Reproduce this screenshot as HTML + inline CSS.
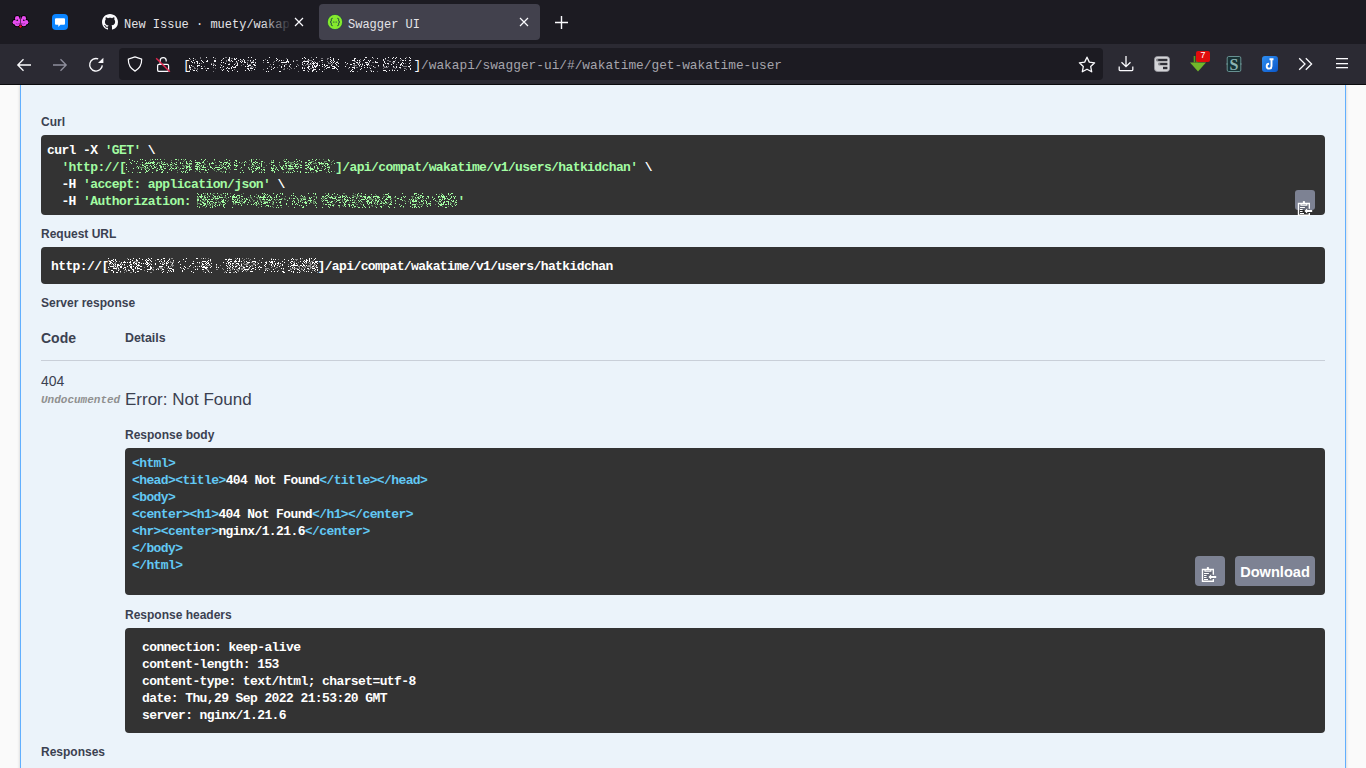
<!DOCTYPE html>
<html><head><meta charset="utf-8"><title>Swagger UI</title>
<style>
html,body{margin:0;padding:0}
body{width:1366px;height:768px;overflow:hidden;position:relative;background:#fafafa;font-family:"Liberation Sans",sans-serif}
.a{position:absolute;white-space:pre}
.mono{font-family:"Liberation Mono",monospace}
.h4{font-size:12px;line-height:16px;font-weight:bold;color:#3b4151}
.code{font-family:"Liberation Mono",monospace;font-size:13px;letter-spacing:-0.6px;line-height:17px;font-weight:bold;color:#fff}
.g{color:#a2fca2}
.t{color:#62c8f3}
.blk{position:absolute;background:#333;border-radius:4px}
.btn{position:absolute;background:#7d8293;border-radius:4px}
</style></head>
<body>
<svg width="0" height="0" style="position:absolute"><defs><symbol id="clip" viewBox="0 0 17 17">
  <rect x="2.5" y="3.5" width="10.8" height="11.8" fill="rgba(0,0,0,0.18)"/>
  <path d="M13.3 8.8V3.5H2.5V15.3H13.3V12.9" fill="none" stroke="#fff" stroke-width="1.4"/>
  <path d="M5 3.3V5.1H10.8V3.3" fill="none" stroke="#fff" stroke-width="1.2"/>
  <circle cx="7.9" cy="2.1" r="1.2" fill="#fff"/>
  <path d="M4 7.5h4.9M4 9.5h2.6M4 11.5h2.6M4 13.5h4" stroke="#fff" stroke-width="1"/>
  <path d="M8.4 11L11.2 8.2V10H16.2V12H11.2V13.8Z" fill="#fff"/>
</symbol></defs></svg>
<!-- ============ TAB STRIP ============ -->
<div class="a" style="left:0;top:0;width:1366px;height:44px;background:#1c1b22"></div>
<!-- brain icon -->
<svg class="a" style="left:12px;top:15px" width="17" height="14" viewBox="0 0 17 14">
  <g fill="#000"><circle cx="5.2" cy="3.4" r="3.1"/><circle cx="2.9" cy="7.2" r="3.1"/><circle cx="5.2" cy="8.8" r="3.3"/><circle cx="11.8" cy="3.4" r="3.1"/><circle cx="14.1" cy="7.2" r="3.1"/><circle cx="11.8" cy="8.8" r="3.3"/><rect x="5" y="1" width="7" height="10.5"/></g>
  <g fill="#e84df0"><circle cx="5.2" cy="3.4" r="2.3"/><circle cx="2.9" cy="7.2" r="2.3"/><circle cx="5.2" cy="8.8" r="2.5"/><circle cx="7" cy="6" r="2.2"/><circle cx="11.8" cy="3.4" r="2.3"/><circle cx="14.1" cy="7.2" r="2.3"/><circle cx="11.8" cy="8.8" r="2.5"/><circle cx="10" cy="6" r="2.2"/></g>
  <rect x="8" y="1.5" width="1" height="9.5" fill="#6a2270"/>
  <circle cx="5.3" cy="5.2" r="0.8" fill="#111"/><circle cx="11.7" cy="5.2" r="0.8" fill="#111"/>
  <path d="M3.8 8.4q1.5 1.2 3.2 0.3M13.2 8.4q-1.5 1.2-3.2 0.3" fill="none" stroke="#8a2a90" stroke-width="0.7"/>
  <circle cx="8.5" cy="11.6" r="1.7" fill="#000"/><circle cx="8.5" cy="11.5" r="1.2" fill="#ee1020"/>
</svg>
<!-- chat icon -->
<svg class="a" style="left:52px;top:14px" width="16" height="16" viewBox="0 0 16 16">
  <rect x="0" y="0" width="16" height="16" rx="4" fill="#0a84ff"/>
  <path d="M4 4.2h8a1 1 0 0 1 1 1v4.6a1 1 0 0 1-1 1H8.4L6.3 12.9V10.8H4a1 1 0 0 1-1-1V5.2a1 1 0 0 1 1-1z" fill="#fff"/>
</svg>
<!-- github tab -->
<svg class="a" style="left:102px;top:14px" width="16" height="16" viewBox="0 0 16 16"><path fill="#fbfbfe" d="M8 0C3.58 0 0 3.58 0 8c0 3.54 2.29 6.53 5.47 7.59.4.07.55-.17.55-.38 0-.19-.01-.82-.01-1.49-2.01.37-2.53-.49-2.69-.94-.09-.23-.48-.94-.82-1.13-.28-.15-.68-.52-.01-.53.63-.01 1.08.58 1.23.82.72 1.21 1.87.87 2.33.66.07-.52.28-.87.51-1.07-1.78-.2-3.64-.89-3.64-3.95 0-.87.31-1.59.82-2.15-.08-.2-.36-1.02.08-2.12 0 0 .67-.21 2.2.82.64-.18 1.32-.27 2-.27.68 0 1.36.09 2 .27 1.53-1.04 2.2-.82 2.2-.82.44 1.1.16 1.92.08 2.12.51.56.82 1.27.82 2.15 0 3.07-1.87 3.75-3.65 3.95.29.25.54.73.54 1.48 0 1.07-.01 1.93-.01 2.2 0 .21.15.46.55.38A8.013 8.013 0 0016 8c0-4.42-3.58-8-8-8z"/></svg>
<div class="a mono" style="left:124px;top:17px;font-size:12px;line-height:16px;color:#e4e4e8;width:168px;overflow:hidden">New Issue · muety/wakap</div>
<div class="a" style="left:262px;top:10px;width:30px;height:26px;background:linear-gradient(to right,rgba(28,27,34,0),#1c1b22)"></div>
<svg class="a" style="left:294px;top:17px" width="10" height="10" viewBox="0 0 10 10"><path d="M1 1L9 9M9 1L1 9" stroke="#fbfbfe" stroke-width="1.2"/></svg>
<!-- swagger tab -->
<div class="a" style="left:319px;top:4px;width:221px;height:36px;background:#42414d;border-radius:4px"></div>
<svg class="a" style="left:327px;top:14px" width="16" height="16" viewBox="0 0 16 16">
  <circle cx="8" cy="8" r="7.6" fill="#85ea2d" stroke="#173647" stroke-width="0.6"/>
  <path d="M5.6 4.3c-1 0-1.3.5-1.3 1.3v1.2c0 .6-.4 1-1 1.2.6.2 1 .6 1 1.2v1.2c0 .8.3 1.3 1.3 1.3M10.4 4.3c1 0 1.3.5 1.3 1.3v1.2c0 .6.4 1 1 1.2-.6.2-1 .6-1 1.2v1.2c0 .8-.3 1.3-1.3 1.3" fill="none" stroke="#173647" stroke-width="1"/>
  <circle cx="6.4" cy="8" r=".5" fill="#173647"/><circle cx="8" cy="8" r=".5" fill="#173647"/><circle cx="9.6" cy="8" r=".5" fill="#173647"/>
</svg>
<div class="a mono" style="left:348px;top:17px;font-size:12px;line-height:16px;color:#e4e4e8">Swagger UI</div>
<svg class="a" style="left:519px;top:17px" width="10" height="10" viewBox="0 0 10 10"><path d="M1 1L9 9M9 1L1 9" stroke="#fbfbfe" stroke-width="1.2"/></svg>
<svg class="a" style="left:554px;top:15px" width="15" height="15" viewBox="0 0 15 15"><path d="M7.5 1V14M1 7.5H14" stroke="#fbfbfe" stroke-width="1.4"/></svg>

<!-- ============ TOOLBAR ============ -->
<div class="a" style="left:0;top:44px;width:1366px;height:40px;background:#2b2a33"></div>
<div class="a" style="left:0;top:84px;width:1366px;height:1px;background:#0b0b0e"></div>
<!-- back -->
<svg class="a" style="left:16px;top:57px" width="16" height="16" viewBox="0 0 16 16"><path d="M15 8H2.2M7.5 2.3L1.8 8l5.7 5.7" fill="none" stroke="#fbfbfe" stroke-width="1.3"/></svg>
<!-- forward -->
<svg class="a" style="left:52px;top:57px" width="16" height="16" viewBox="0 0 16 16"><path d="M1 8h12.8M8.5 2.3L14.2 8l-5.7 5.7" fill="none" stroke="#8f8f9d" stroke-width="1.3"/></svg>
<!-- reload -->
<svg class="a" style="left:88px;top:57px" width="16" height="16" viewBox="0 0 16 16"><path d="M10.2 1.9A6.3 6.3 0 1 0 14.3 8.4" fill="none" stroke="#fbfbfe" stroke-width="1.35"/><path d="M10 6.1H15.4V0.7z" fill="#fbfbfe"/></svg>
<!-- urlbar -->
<div class="a" style="left:119px;top:48px;width:984px;height:32px;background:#1c1b22;border-radius:4px"></div>
<!-- shield -->
<svg class="a" style="left:127px;top:56px" width="16" height="16" viewBox="0 0 16 16"><path d="M8 0.9L1.3 3.1C1.2 9.2 4 13 8 15.1 12 13 14.8 9.2 14.7 3.1Z" fill="none" stroke="#fbfbfe" stroke-width="1.2" stroke-linejoin="round"/></svg>
<!-- lock with slash -->
<svg class="a" style="left:155px;top:56px" width="16" height="16" viewBox="0 0 16 16"><path d="M5.2 8.4V4.6a3 3 0 0 1 6 0V5.6" fill="none" stroke="#fbfbfe" stroke-width="1.25"/><rect x="2.6" y="8.4" width="11" height="7" rx="1.4" fill="none" stroke="#fbfbfe" stroke-width="1.25"/><path d="M1.2 2.2L14.9 15.8" stroke="#e22850" stroke-width="1.4"/></svg>
<div class="a mono" style="left:183px;top:58px;font-size:12.8px;line-height:16px;color:#fbfbfe">[<span style="color:transparent">xxxxxxxxxxxxxxxxxxxxxxxxxxxxx</span>]<span style="color:#a6a5ad">/wakapi/swagger-ui/#/wakatime/get-wakatime-user</span></div>
<svg style="position:absolute;left:189px;top:57px;opacity:1.0" width="222" height="15" viewBox="0 0 222 15"><path fill="#f0f0f4" d="M207 0h1v1h-1zM12 3h1v1h-1zM32 8h1v1h-1zM95 9h1v1h-1zM181 3h1v1h-1zM164 6h2v1h-2zM200 13h1v1h-1zM137 8h2v1h-2zM61 3h1v1h-1zM205 13h1v1h-1zM56 9h1v1h-1zM34 5h1v1h-1zM194 2h1v1h-1zM14 5h1v1h-1zM133 9h1v1h-1zM13 4h1v1h-1zM10 6h1v1h-1zM127 6h2v1h-2zM92 5h6v1h-6zM168 3h1v1h-1zM195 4h1v1h-1zM144 3h1v1h-1zM97 4h3v1h-3zM84 7h1v1h-1zM161 14h1v1h-1zM124 12h3v1h-3zM74 3h1v1h-1zM221 1h1v1h-1zM149 6h1v1h-1zM127 0h1v1h-1zM51 2h1v1h-1zM208 13h1v1h-1zM100 9h1v1h-1zM43 9h1v1h-1zM78 11h1v1h-1zM212 6h1v1h-1zM31 10h1v1h-1zM62 0h1v1h-1zM82 12h1v1h-1zM156 5h1v1h-1zM176 5h3v1h-3zM114 4h6v1h-6zM39 3h2v1h-2zM1 12h1v1h-1zM51 4h1v1h-1zM113 1h1v1h-1zM115 0h1v1h-1zM141 2h1v1h-1zM2 4h1v1h-1zM165 2h1v1h-1zM144 1h1v1h-1zM115 6h1v1h-1zM196 1h1v1h-1zM189 8h1v1h-1zM60 13h1v1h-1zM221 12h1v1h-1zM204 4h2v1h-2zM123 13h2v1h-2zM34 12h1v1h-1zM65 8h2v1h-2zM113 5h1v1h-1zM165 11h1v1h-1zM135 7h1v1h-1zM197 14h1v1h-1zM61 11h3v1h-3zM87 3h1v1h-1zM142 5h1v1h-1zM48 14h1v1h-1zM178 8h1v1h-1zM204 0h1v1h-1zM149 9h1v1h-1zM137 11h1v1h-1zM66 5h1v1h-1zM44 10h3v1h-3zM195 5h1v1h-1zM194 7h1v1h-1zM37 11h1v1h-1zM113 11h1v1h-1zM144 2h1v1h-1zM136 9h1v1h-1zM141 0h1v1h-1zM172 11h1v1h-1zM84 11h1v1h-1zM7 4h2v1h-2zM65 12h1v1h-1zM179 3h1v1h-1zM45 7h1v1h-1zM36 6h1v1h-1zM184 14h1v1h-1zM54 2h1v1h-1zM213 3h2v1h-2zM64 7h2v1h-2zM142 8h1v1h-1zM47 1h1v1h-1zM130 12h1v1h-1zM211 1h1v1h-1zM56 13h1v1h-1zM8 8h3v1h-3zM99 5h1v1h-1zM132 3h2v1h-2zM32 3h1v1h-1zM79 14h1v1h-1zM12 9h1v1h-1zM143 11h3v1h-3zM126 5h1v1h-1zM0 10h2v1h-2zM123 6h3v1h-3zM184 9h1v1h-1zM175 10h1v1h-1zM95 8h1v1h-1zM123 14h1v1h-1zM59 0h1v1h-1zM167 5h2v1h-2zM138 10h3v1h-3zM2 8h1v1h-1zM119 9h2v1h-2zM0 1h1v1h-1zM46 9h1v1h-1zM58 9h2v1h-2zM128 7h1v1h-1zM43 4h1v1h-1zM135 8h1v1h-1zM8 9h1v1h-1zM113 7h1v1h-1zM90 3h1v1h-1zM87 1h1v1h-1zM77 14h1v1h-1zM8 6h1v1h-1zM34 1h1v1h-1zM124 5h1v1h-1zM40 1h1v1h-1zM55 4h1v1h-1zM163 14h2v1h-2zM39 7h2v1h-2zM38 13h1v1h-1zM127 8h2v1h-2zM213 8h1v1h-1zM170 5h1v1h-1zM98 2h1v1h-1zM49 3h1v1h-1zM197 9h1v1h-1zM32 5h1v1h-1zM216 1h1v1h-1zM5 5h1v1h-1zM123 10h2v1h-2zM62 5h3v1h-3zM211 7h2v1h-2zM220 0h1v1h-1zM210 10h2v1h-2zM211 8h1v1h-1zM116 1h1v1h-1zM203 13h1v1h-1zM26 8h1v1h-1zM133 7h1v1h-1zM78 5h2v1h-2zM18 11h2v1h-2zM24 8h1v1h-1zM143 9h3v1h-3zM59 12h1v1h-1zM207 9h1v1h-1zM92 9h1v1h-1zM47 8h2v1h-2zM209 5h1v1h-1zM42 3h1v1h-1zM25 4h2v1h-2zM124 2h1v1h-1zM123 8h1v1h-1zM42 10h1v1h-1zM172 9h1v1h-1zM177 7h3v1h-3zM163 10h3v1h-3zM177 14h1v1h-1zM4 13h2v1h-2zM24 0h1v1h-1zM204 6h1v1h-1zM113 10h1v1h-1zM169 7h1v1h-1zM194 13h3v1h-3zM173 7h1v1h-1zM194 8h1v1h-1zM98 3h1v1h-1zM142 3h1v1h-1zM221 8h1v1h-1zM101 7h1v1h-1zM43 13h1v1h-1zM104 4h1v1h-1zM0 9h1v1h-1zM207 10h1v1h-1zM163 3h3v1h-3zM127 14h1v1h-1zM22 7h1v1h-1zM88 2h1v1h-1zM125 8h1v1h-1zM130 8h1v1h-1zM161 7h2v1h-2zM39 11h2v1h-2zM196 6h1v1h-1zM186 4h1v1h-1zM17 4h2v1h-2zM170 3h1v1h-1zM175 2h1v1h-1zM55 3h1v1h-1zM42 11h1v1h-1zM175 8h1v1h-1zM145 10h2v1h-2zM220 3h2v1h-2zM114 13h2v1h-2zM194 3h1v1h-1zM3 5h1v1h-1zM126 10h1v1h-1zM133 14h1v1h-1zM120 12h1v1h-1zM39 14h1v1h-1zM64 3h1v1h-1zM156 9h1v1h-1zM4 3h1v1h-1zM145 4h1v1h-1zM25 3h2v1h-2zM180 4h1v1h-1zM39 2h2v1h-2zM17 0h1v1h-1zM119 14h1v1h-1zM45 2h2v1h-2zM147 7h1v1h-1zM78 3h1v1h-1zM188 1h1v1h-1zM119 5h1v1h-1zM204 9h1v1h-1zM176 0h2v1h-2zM58 11h2v1h-2zM215 13h1v1h-1zM165 1h2v1h-2zM52 5h1v1h-1zM214 6h1v1h-1zM216 3h1v1h-1zM48 6h1v1h-1zM186 5h3v1h-3zM160 10h1v1h-1zM171 7h1v1h-1zM219 9h2v1h-2zM163 12h1v1h-1zM92 3h1v1h-1zM12 11h2v1h-2zM66 2h1v1h-1zM92 10h1v1h-1zM179 6h1v1h-1zM199 0h1v1h-1zM47 4h1v1h-1zM8 5h1v1h-1zM90 14h2v1h-2zM107 9h1v1h-1zM220 6h1v1h-1zM123 9h1v1h-1zM123 4h1v1h-1zM45 1h1v1h-1zM80 0h1v1h-1zM203 1h1v1h-1zM182 14h1v1h-1zM85 10h1v1h-1zM149 2h1v1h-1zM119 11h1v1h-1zM121 6h1v1h-1zM147 5h2v1h-2zM55 5h2v1h-2zM4 1h1v1h-1zM158 6h1v1h-1zM0 14h1v1h-1zM53 4h1v1h-1zM40 0h1v1h-1zM59 8h3v1h-3zM18 3h1v1h-1zM202 7h1v1h-1zM146 6h1v1h-1zM58 7h1v1h-1zM221 11h1v1h-1zM115 11h1v1h-1zM148 12h1v1h-1zM38 10h1v1h-1zM48 7h1v1h-1zM170 8h1v1h-1zM124 7h1v1h-1zM119 2h1v1h-1zM183 0h1v1h-1zM0 8h1v1h-1zM198 6h2v1h-2zM7 13h1v1h-1zM17 13h1v1h-1zM162 13h1v1h-1zM178 10h1v1h-1zM206 1h1v1h-1zM171 12h1v1h-1zM144 5h1v1h-1zM181 11h1v1h-1zM33 13h1v1h-1zM125 9h3v1h-3zM174 3h1v1h-1zM118 10h2v1h-2zM34 9h1v1h-1zM118 6h1v1h-1zM147 11h1v1h-1zM213 5h1v1h-1zM141 4h1v1h-1z"/><path fill="#f0f0f4" fill-opacity="0.45" d="M31 7h1v1h-1zM173 6h1v1h-1zM58 5h1v1h-1zM11 1h1v1h-1zM217 12h1v1h-1zM26 11h1v1h-1zM109 14h1v1h-1zM102 11h1v1h-1zM46 6h1v1h-1zM180 10h1v1h-1zM216 6h1v1h-1zM196 2h1v1h-1zM206 3h1v1h-1zM204 10h2v1h-2zM207 7h1v1h-1zM194 11h1v1h-1zM33 2h1v1h-1zM54 7h1v1h-1zM94 12h2v1h-2zM89 4h1v1h-1zM138 4h1v1h-1zM133 5h1v1h-1zM195 10h4v1h-4zM135 12h1v1h-1zM84 5h1v1h-1zM118 3h5v1h-5zM80 9h1v1h-1zM97 1h1v1h-1zM143 4h1v1h-1zM8 12h1v1h-1zM24 14h1v1h-1zM198 3h2v1h-2zM180 8h1v1h-1zM122 0h1v1h-1zM130 4h1v1h-1zM95 11h1v1h-1zM180 5h1v1h-1zM168 14h1v1h-1zM40 6h1v1h-1zM170 9h1v1h-1zM63 4h2v1h-2zM121 11h2v1h-2zM0 11h2v1h-2zM199 7h1v1h-1zM100 12h1v1h-1zM212 2h1v1h-1zM36 0h2v1h-2zM52 3h2v1h-2zM90 8h1v1h-1zM107 3h2v1h-2zM32 12h1v1h-1zM199 9h1v1h-1zM93 7h1v1h-1zM138 2h1v1h-1zM149 14h1v1h-1zM81 7h1v1h-1zM47 5h2v1h-2zM143 6h1v1h-1zM200 4h2v1h-2zM6 2h1v1h-1zM8 11h1v1h-1zM96 7h2v1h-2zM74 5h1v1h-1zM100 8h1v1h-1zM188 14h1v1h-1zM66 10h1v1h-1zM5 6h1v1h-1zM206 11h1v1h-1zM76 2h1v1h-1zM58 6h1v1h-1zM125 4h1v1h-1zM185 10h2v1h-2zM215 11h2v1h-2zM177 6h1v1h-1zM171 2h1v1h-1zM24 7h2v1h-2zM12 6h1v1h-1zM113 6h1v1h-1zM203 12h1v1h-1zM26 1h1v1h-1zM33 10h1v1h-1zM214 9h4v1h-4zM115 3h1v1h-1zM117 7h6v1h-6zM64 10h1v1h-1zM58 3h2v1h-2zM104 3h1v1h-1zM101 10h1v1h-1zM85 4h1v1h-1zM24 6h1v1h-1zM94 3h1v1h-1zM211 11h1v1h-1zM211 3h1v1h-1zM114 8h1v1h-1zM22 6h1v1h-1zM119 8h1v1h-1zM124 11h1v1h-1zM138 1h2v1h-2zM37 3h1v1h-1zM37 4h1v1h-1zM3 9h2v1h-2zM165 7h1v1h-1zM62 9h2v1h-2zM109 8h1v1h-1zM203 5h3v1h-3zM16 11h1v1h-1zM8 14h1v1h-1zM148 4h1v1h-1zM165 4h2v1h-2zM159 11h1v1h-1zM118 13h1v1h-1zM40 4h2v1h-2zM82 10h1v1h-1zM147 8h2v1h-2zM74 12h1v1h-1zM189 9h1v1h-1zM184 1h1v1h-1zM128 5h1v1h-1zM115 10h1v1h-1zM61 10h2v1h-2zM140 9h1v1h-1zM170 4h2v1h-2zM116 8h1v1h-1zM139 6h3v1h-3zM132 1h2v1h-2zM220 10h1v1h-1zM221 5h1v1h-1zM62 6h1v1h-1zM98 11h1v1h-1zM45 12h1v1h-1zM194 9h2v1h-2zM0 13h1v1h-1zM61 4h1v1h-1zM66 6h1v1h-1zM164 8h4v1h-4zM82 9h1v1h-1zM183 5h2v1h-2zM52 8h1v1h-1zM142 7h2v1h-2zM181 13h2v1h-2zM24 10h1v1h-1zM105 11h1v1h-1zM157 7h1v1h-1zM11 0h1v1h-1zM15 9h1v1h-1zM108 7h1v1h-1zM122 5h1v1h-1zM88 10h1v1h-1zM173 8h1v1h-1zM60 7h2v1h-2zM5 10h1v1h-1zM135 10h1v1h-1zM139 5h1v1h-1zM182 8h1v1h-1zM167 10h2v1h-2zM168 6h3v1h-3zM42 1h2v1h-2zM5 11h2v1h-2zM217 0h1v1h-1zM3 12h1v1h-1zM165 9h1v1h-1zM62 13h1v1h-1zM1 2h1v1h-1z"/></svg>
<!-- star -->
<svg class="a" style="left:1078px;top:56px" width="18" height="17" viewBox="0 0 18 17"><path d="M9 1.2l2.3 4.9 5.3.7-3.9 3.7 1 5.3L9 13.2l-4.7 2.6 1-5.3L1.4 6.8l5.3-.7z" fill="none" stroke="#fbfbfe" stroke-width="1.3" stroke-linejoin="round"/></svg>
<!-- download -->
<svg class="a" style="left:1118px;top:55px" width="16" height="17" viewBox="0 0 16 17"><path d="M8 1v10.5M3.5 7.2L8 11.7l4.5-4.5M1.2 11.5v3.3a.8.8 0 0 0 .8.8h12a.8.8 0 0 0 .8-.8v-3.3" fill="none" stroke="#fbfbfe" stroke-width="1.3"/></svg>
<!-- server icon -->
<svg class="a" style="left:1154px;top:56px" width="16" height="16" viewBox="0 0 16 16"><rect x="0.5" y="0.5" width="15" height="15" rx="3" fill="#d4d4d8" stroke="#9a9aa2" stroke-width="0.8"/><rect x="2.6" y="2.8" width="10.8" height="2.4" fill="#2e2e36"/><rect x="4.6" y="6.8" width="8.8" height="2.4" fill="#2e2e36"/><rect x="9" y="10.8" width="4.4" height="2.4" fill="#2e2e36"/><rect x="3.2" y="3.5" width="1" height="1" fill="#fff"/><rect x="5.2" y="7.5" width="1" height="1" fill="#fff"/></svg>
<!-- green arrow ext -->
<svg class="a" style="left:1189px;top:54px" width="18" height="18" viewBox="0 0 18 18"><path d="M1 8.5H17L9 17.5Z" fill="#72b62a"/><path d="M5.5 2v6.5M8 3v5.5M10.5 2.5V8" stroke="#5aa020" stroke-width="1.6"/></svg>
<div class="a" style="left:1196px;top:51px;width:14px;height:11px;background:#e00c0c;border-radius:2px"></div>
<div class="a" style="left:1196px;top:50px;width:14px;height:12px;font-size:9px;line-height:12px;color:#fff;text-align:center;font-family:'Liberation Mono',monospace">7</div>
<!-- S icon -->
<svg class="a" style="left:1226px;top:56px" width="16" height="16" viewBox="0 0 16 16"><rect x="1.2" y="0.5" width="13.6" height="15" rx="1.5" fill="#183234" stroke="#6f9c9c" stroke-width="0.9"/><path d="M0.3 8h1.5M14.2 8h1.5" stroke="#6f9c9c" stroke-width="1"/><text x="8" y="13.6" text-anchor="middle" font-family="Liberation Serif" font-weight="bold" font-size="16" fill="#8cb4b2">S</text></svg>
<!-- J icon -->
<svg class="a" style="left:1262px;top:56px" width="16" height="16" viewBox="0 0 16 16"><defs><linearGradient id="jg" x1="0" y1="0" x2="1" y2="1"><stop offset="0" stop-color="#2f8ff2"/><stop offset="1" stop-color="#0a56c9"/></linearGradient></defs><rect x="0" y="0" width="16" height="16" rx="3" fill="url(#jg)"/><path d="M7.5 3.2h4M9.5 3.2v7a2.4 2.4 0 1 1-2.4-2.4" fill="none" stroke="#fff" stroke-width="1.9"/></svg>
<!-- >> -->
<svg class="a" style="left:1298px;top:57px" width="16" height="14" viewBox="0 0 16 14"><path d="M1.2 1.2L7 7 1.2 12.8M7.8 1.2L13.6 7 7.8 12.8" fill="none" stroke="#fbfbfe" stroke-width="1.3"/></svg>
<!-- hamburger -->
<div class="a" style="left:1336px;top:58px;width:12px;height:1px;background:#fbfbfe;box-shadow:0 1px 0 rgba(251,251,254,.3)"></div>
<div class="a" style="left:1336px;top:63px;width:12px;height:1px;background:#fbfbfe;box-shadow:0 1px 0 rgba(251,251,254,.3)"></div>
<div class="a" style="left:1336px;top:67px;width:12px;height:1px;background:#fbfbfe;box-shadow:0 1px 0 rgba(251,251,254,.3)"></div>

<!-- ============ CONTENT ============ -->
<div class="a" style="left:20px;top:85px;width:1324px;height:700px;background:#ebf3fa;border:1px solid #61affe;border-top:none;box-shadow:0 0 3px rgba(0,0,0,.19)"></div>

<div class="a h4" style="left:41px;top:114px">Curl</div>
<div class="blk" style="left:41px;top:135px;width:1284px;height:80px"></div>
<div class="a code" style="left:47px;top:142px">curl -X <span class="g">'GET'</span> \
  <span class="g">'http://[                             ]/api/compat/wakatime/v1/users/hatkidchan'</span> \
  -H <span class="g">'accept: application/json'</span> \
  -H <span class="g">'Authorization:                                     '</span></div>
<svg style="position:absolute;left:126px;top:159px;opacity:1.0" width="209" height="14" viewBox="0 0 209 14"><path fill="#a2fca2" d="M49 0h2v1h-2zM77 6h1v1h-1zM199 9h1v1h-1zM89 8h5v1h-5zM86 3h1v1h-1zM8 2h1v1h-1zM149 10h1v1h-1zM115 8h1v1h-1zM54 9h1v1h-1zM129 11h1v1h-1zM103 1h1v1h-1zM35 2h1v1h-1zM201 6h1v1h-1zM84 7h1v1h-1zM123 10h1v1h-1zM125 8h1v1h-1zM71 4h1v1h-1zM100 4h1v1h-1zM118 3h1v1h-1zM166 13h1v1h-1zM101 7h2v1h-2zM99 5h1v1h-1zM48 4h1v1h-1zM130 0h1v1h-1zM77 7h1v1h-1zM91 10h3v1h-3zM34 0h1v1h-1zM108 5h1v1h-1zM49 5h2v1h-2zM160 0h1v1h-1zM20 6h2v1h-2zM135 5h1v1h-1zM138 13h1v1h-1zM96 8h1v1h-1zM168 7h3v1h-3zM70 10h2v1h-2zM16 3h1v1h-1zM64 1h1v1h-1zM73 8h1v1h-1zM130 7h1v1h-1zM33 10h1v1h-1zM183 3h3v1h-3zM205 12h1v1h-1zM160 13h1v1h-1zM19 1h1v1h-1zM35 4h1v1h-1zM14 0h1v1h-1zM50 8h1v1h-1zM73 4h2v1h-2zM113 3h1v1h-1zM42 6h1v1h-1zM184 10h4v1h-4zM69 7h4v1h-4zM164 13h1v1h-1zM34 8h2v1h-2zM12 8h1v1h-1zM193 4h5v1h-5zM45 3h1v1h-1zM99 13h1v1h-1zM135 6h1v1h-1zM22 3h1v1h-1zM146 10h1v1h-1zM155 9h2v1h-2zM104 6h1v1h-1zM103 8h1v1h-1zM172 7h1v1h-1zM28 5h1v1h-1zM24 3h5v1h-5zM118 6h1v1h-1zM13 13h2v1h-2zM50 3h1v1h-1zM160 7h1v1h-1zM135 7h1v1h-1zM75 10h3v1h-3zM83 4h1v1h-1zM150 8h1v1h-1zM0 8h1v1h-1zM56 13h1v1h-1zM145 11h3v1h-3zM56 4h1v1h-1zM126 13h1v1h-1zM131 8h3v1h-3zM190 12h2v1h-2zM20 11h1v1h-1zM24 6h1v1h-1zM2 12h1v1h-1zM20 12h2v1h-2zM59 0h1v1h-1zM45 8h1v1h-1zM55 12h1v1h-1zM5 4h1v1h-1zM171 2h1v1h-1zM182 13h1v1h-1zM155 8h2v1h-2zM44 9h1v1h-1zM202 10h1v1h-1zM97 5h1v1h-1zM147 6h2v1h-2zM98 3h4v1h-4zM79 10h1v1h-1zM19 4h6v1h-6zM184 4h1v1h-1zM16 0h1v1h-1zM184 11h1v1h-1zM94 3h2v1h-2zM190 0h1v1h-1zM188 8h1v1h-1zM30 11h2v1h-2zM171 12h1v1h-1zM65 2h1v1h-1zM135 4h1v1h-1zM174 13h1v1h-1zM198 10h1v1h-1zM63 8h2v1h-2zM162 2h1v1h-1zM129 9h3v1h-3zM191 9h2v1h-2zM88 0h1v1h-1zM73 6h1v1h-1zM133 13h1v1h-1zM162 9h6v1h-6zM135 10h1v1h-1zM63 11h1v1h-1zM138 11h1v1h-1zM81 13h1v1h-1zM28 7h1v1h-1zM23 10h1v1h-1zM174 6h2v1h-2zM78 1h1v1h-1zM10 4h1v1h-1zM118 5h1v1h-1zM110 4h1v1h-1zM0 10h1v1h-1zM49 9h2v1h-2zM28 8h2v1h-2zM30 5h1v1h-1zM55 0h1v1h-1zM173 1h1v1h-1zM108 10h3v1h-3zM41 5h1v1h-1zM130 3h2v1h-2zM60 2h1v1h-1zM97 7h1v1h-1zM75 0h1v1h-1zM196 7h1v1h-1zM162 6h3v1h-3zM11 7h1v1h-1zM26 4h2v1h-2zM63 4h3v1h-3zM84 8h2v1h-2zM168 4h1v1h-1zM75 6h1v1h-1zM16 6h2v1h-2zM167 11h1v1h-1zM156 10h2v1h-2zM6 13h1v1h-1zM179 13h2v1h-2zM186 0h1v1h-1zM60 8h2v1h-2zM110 2h1v1h-1zM77 2h1v1h-1zM201 8h3v1h-3zM33 6h2v1h-2zM70 5h3v1h-3zM88 9h1v1h-1zM163 7h4v1h-4zM35 10h2v1h-2zM76 8h4v1h-4zM182 4h1v1h-1zM126 7h1v1h-1zM15 10h1v1h-1zM60 11h1v1h-1zM152 11h1v1h-1zM54 4h1v1h-1zM145 5h1v1h-1zM133 9h1v1h-1zM31 4h1v1h-1zM174 8h2v1h-2zM126 4h1v1h-1zM189 11h2v1h-2zM60 7h4v1h-4zM79 11h2v1h-2zM147 1h1v1h-1zM193 11h3v1h-3zM6 1h1v1h-1zM168 12h1v1h-1zM69 3h5v1h-5zM19 8h1v1h-1zM157 6h1v1h-1zM60 3h1v1h-1zM11 2h1v1h-1zM82 10h1v1h-1zM19 13h1v1h-1zM108 6h4v1h-4zM60 9h1v1h-1zM181 8h2v1h-2zM202 12h1v1h-1zM0 5h1v1h-1zM45 11h1v1h-1zM43 10h1v1h-1zM63 6h1v1h-1zM119 2h1v1h-1zM94 9h2v1h-2zM110 7h1v1h-1zM100 10h1v1h-1zM4 3h1v1h-1zM73 10h1v1h-1zM20 3h1v1h-1zM27 2h1v1h-1zM59 13h1v1h-1zM126 12h2v1h-2zM37 11h1v1h-1zM99 12h1v1h-1zM25 7h1v1h-1zM97 4h1v1h-1zM83 5h1v1h-1zM44 5h2v1h-2zM73 12h1v1h-1zM41 13h1v1h-1zM191 8h1v1h-1zM179 3h2v1h-2zM208 4h1v1h-1zM129 2h1v1h-1zM169 6h1v1h-1zM148 13h1v1h-1zM26 9h2v1h-2zM93 2h1v1h-1zM175 2h1v1h-1zM18 7h2v1h-2zM179 6h3v1h-3zM133 4h1v1h-1zM151 10h1v1h-1zM122 8h1v1h-1zM202 0h1v1h-1zM158 2h2v1h-2zM57 12h1v1h-1zM114 13h1v1h-1zM125 1h1v1h-1zM69 1h1v1h-1zM59 12h1v1h-1zM182 1h2v1h-2zM179 9h2v1h-2zM159 6h2v1h-2zM38 3h1v1h-1zM168 2h1v1h-1zM170 0h1v1h-1zM154 7h1v1h-1zM174 12h1v1h-1zM108 3h1v1h-1zM148 12h1v1h-1zM189 1h1v1h-1zM98 8h2v1h-2zM126 5h2v1h-2zM31 9h1v1h-1zM159 4h2v1h-2zM37 7h1v1h-1zM102 4h2v1h-2zM145 9h3v1h-3zM69 9h3v1h-3zM135 2h2v1h-2zM129 4h1v1h-1zM135 13h1v1h-1zM3 0h1v1h-1zM198 6h1v1h-1zM16 5h1v1h-1zM145 3h3v1h-3zM190 6h1v1h-1zM125 0h1v1h-1zM34 7h2v1h-2zM127 3h2v1h-2zM102 6h1v1h-1zM182 7h1v1h-1zM116 11h1v1h-1zM183 9h4v1h-4zM193 5h1v1h-1zM79 0h1v1h-1zM29 0h1v1h-1zM109 1h2v1h-2zM169 5h3v1h-3zM103 5h1v1h-1zM36 12h1v1h-1zM63 10h3v1h-3zM38 9h2v1h-2zM130 10h1v1h-1zM153 3h1v1h-1zM21 8h1v1h-1zM86 9h1v1h-1zM12 9h1v1h-1zM145 8h1v1h-1zM93 6h1v1h-1zM162 13h1v1h-1zM26 0h1v1h-1zM31 0h1v1h-1zM199 4h3v1h-3zM117 13h1v1h-1zM182 5h2v1h-2zM36 5h4v1h-4zM188 7h1v1h-1zM202 1h2v1h-2zM195 3h1v1h-1zM56 9h2v1h-2zM26 13h1v1h-1zM7 9h1v1h-1zM203 13h1v1h-1zM61 13h1v1h-1zM46 9h2v1h-2zM199 7h1v1h-1zM201 5h2v1h-2zM71 8h1v1h-1zM125 2h1v1h-1zM22 11h1v1h-1zM125 10h1v1h-1zM127 9h1v1h-1zM54 3h1v1h-1zM35 13h2v1h-2zM76 3h2v1h-2zM60 4h2v1h-2zM192 3h2v1h-2zM170 9h2v1h-2zM137 10h2v1h-2zM85 4h3v1h-3zM19 10h1v1h-1zM27 6h1v1h-1zM100 0h1v1h-1zM184 8h1v1h-1z"/><path fill="#a2fca2" fill-opacity="0.45" d="M30 7h1v1h-1zM98 9h3v1h-3zM158 0h1v1h-1zM208 12h1v1h-1zM170 3h1v1h-1zM89 6h2v1h-2zM94 12h2v1h-2zM184 7h1v1h-1zM147 2h1v1h-1zM52 1h1v1h-1zM123 5h1v1h-1zM162 4h1v1h-1zM128 7h1v1h-1zM185 2h3v1h-3zM200 13h1v1h-1zM191 10h1v1h-1zM125 3h1v1h-1zM34 9h2v1h-2zM202 11h1v1h-1zM45 1h1v1h-1zM133 0h1v1h-1zM88 1h1v1h-1zM133 7h1v1h-1zM44 6h1v1h-1zM149 7h1v1h-1zM125 6h1v1h-1zM102 9h2v1h-2zM159 9h2v1h-2zM198 3h1v1h-1zM138 3h1v1h-1zM98 1h1v1h-1zM143 4h1v1h-1zM78 5h2v1h-2zM197 0h1v1h-1zM206 2h1v1h-1zM193 0h1v1h-1zM48 10h1v1h-1zM120 3h1v1h-1zM78 13h1v1h-1zM202 7h2v1h-2zM49 7h1v1h-1zM127 0h1v1h-1zM61 10h1v1h-1zM39 7h1v1h-1zM187 4h4v1h-4zM185 5h1v1h-1zM33 4h1v1h-1zM18 5h2v1h-2zM71 11h1v1h-1zM156 7h2v1h-2zM65 7h1v1h-1zM58 8h1v1h-1zM147 8h1v1h-1zM205 3h1v1h-1zM31 3h3v1h-3zM158 8h1v1h-1zM69 6h2v1h-2zM14 8h4v1h-4zM94 5h2v1h-2zM132 10h1v1h-1zM163 11h1v1h-1zM90 12h1v1h-1zM45 10h1v1h-1zM37 8h1v1h-1zM57 2h1v1h-1zM95 7h1v1h-1zM146 12h1v1h-1zM58 1h1v1h-1zM175 3h1v1h-1zM23 2h1v1h-1zM195 5h3v1h-3zM131 5h1v1h-1zM74 13h1v1h-1zM160 8h1v1h-1zM153 6h1v1h-1zM73 9h2v1h-2zM18 9h5v1h-5zM25 8h1v1h-1zM153 5h1v1h-1zM59 6h2v1h-2zM116 3h1v1h-1zM11 13h1v1h-1zM179 4h1v1h-1zM160 3h8v1h-8zM166 8h1v1h-1zM185 13h1v1h-1zM157 1h1v1h-1zM203 9h1v1h-1zM63 9h2v1h-2zM180 10h2v1h-2zM114 9h1v1h-1zM104 3h1v1h-1zM195 9h1v1h-1zM135 12h1v1h-1zM69 12h1v1h-1zM52 0h1v1h-1zM53 10h1v1h-1zM157 13h1v1h-1zM135 3h1v1h-1zM88 11h1v1h-1zM159 5h1v1h-1zM44 7h2v1h-2zM51 11h1v1h-1zM147 7h1v1h-1zM78 4h1v1h-1zM57 0h1v1h-1zM162 10h4v1h-4zM149 9h2v1h-2zM56 6h2v1h-2zM38 0h1v1h-1zM51 7h1v1h-1zM169 8h1v1h-1zM37 4h1v1h-1zM35 3h2v1h-2zM145 2h1v1h-1zM190 13h1v1h-1zM109 8h1v1h-1zM13 7h1v1h-1zM52 8h1v1h-1zM104 10h1v1h-1zM187 13h1v1h-1zM183 6h1v1h-1zM92 11h1v1h-1zM132 6h1v1h-1zM14 5h1v1h-1zM115 4h1v1h-1zM101 2h1v1h-1zM81 7h1v1h-1zM46 6h2v1h-2zM171 4h2v1h-2zM198 2h3v1h-3zM15 9h1v1h-1zM199 5h1v1h-1zM123 1h1v1h-1zM30 10h1v1h-1zM188 9h1v1h-1zM164 8h1v1h-1zM191 7h1v1h-1zM81 2h1v1h-1zM96 13h1v1h-1zM164 5h4v1h-4zM61 5h5v1h-5zM161 12h2v1h-2zM136 11h1v1h-1zM126 11h1v1h-1zM180 5h1v1h-1zM97 12h1v1h-1zM23 7h1v1h-1zM24 0h1v1h-1zM89 3h1v1h-1zM95 6h2v1h-2zM74 7h2v1h-2zM203 2h1v1h-1zM171 8h2v1h-2zM87 10h1v1h-1zM122 9h2v1h-2zM57 7h2v1h-2zM189 3h1v1h-1zM207 1h1v1h-1zM205 5h1v1h-1zM46 4h1v1h-1zM41 7h1v1h-1zM40 4h2v1h-2zM83 6h1v1h-1zM30 12h1v1h-1zM127 6h2v1h-2zM10 8h1v1h-1zM24 1h1v1h-1zM140 6h1v1h-1zM63 2h1v1h-1zM103 13h1v1h-1zM145 1h1v1h-1zM51 13h1v1h-1zM137 8h2v1h-2zM173 5h2v1h-2zM164 4h2v1h-2z"/></svg>
<svg style="position:absolute;left:197px;top:193px;opacity:1.0" width="260" height="15" viewBox="0 0 260 15"><path fill="#a2fca2" d="M188 1h3v1h-3zM79 3h1v1h-1zM2 3h4v1h-4zM48 7h1v1h-1zM152 13h1v1h-1zM96 0h1v1h-1zM35 6h2v1h-2zM18 11h1v1h-1zM38 9h5v1h-5zM219 14h1v1h-1zM83 8h1v1h-1zM104 12h1v1h-1zM85 1h1v1h-1zM128 7h3v1h-3zM221 5h2v1h-2zM184 14h1v1h-1zM255 13h1v1h-1zM61 10h1v1h-1zM109 12h1v1h-1zM77 4h1v1h-1zM66 3h2v1h-2zM37 1h1v1h-1zM28 7h1v1h-1zM166 11h1v1h-1zM25 9h3v1h-3zM100 5h1v1h-1zM28 10h1v1h-1zM149 3h1v1h-1zM188 9h2v1h-2zM37 7h1v1h-1zM254 7h1v1h-1zM35 5h1v1h-1zM155 7h1v1h-1zM113 8h1v1h-1zM11 6h2v1h-2zM238 7h1v1h-1zM247 5h2v1h-2zM242 11h5v1h-5zM153 5h1v1h-1zM220 4h2v1h-2zM116 0h1v1h-1zM30 1h1v1h-1zM174 8h1v1h-1zM10 8h2v1h-2zM71 3h1v1h-1zM7 4h2v1h-2zM182 6h1v1h-1zM79 14h1v1h-1zM217 14h1v1h-1zM132 4h4v1h-4zM223 2h2v1h-2zM4 2h1v1h-1zM155 14h1v1h-1zM82 3h1v1h-1zM258 9h2v1h-2zM16 9h1v1h-1zM198 3h1v1h-1zM64 11h1v1h-1zM143 3h1v1h-1zM68 1h1v1h-1zM10 0h1v1h-1zM192 11h3v1h-3zM16 2h1v1h-1zM13 11h1v1h-1zM257 4h1v1h-1zM67 2h1v1h-1zM41 11h1v1h-1zM35 3h3v1h-3zM131 1h1v1h-1zM191 0h1v1h-1zM73 13h1v1h-1zM163 7h1v1h-1zM28 0h1v1h-1zM35 8h2v1h-2zM62 4h7v1h-7zM72 2h1v1h-1zM43 10h1v1h-1zM186 10h2v1h-2zM0 6h2v1h-2zM254 0h2v1h-2zM9 13h1v1h-1zM162 8h1v1h-1zM67 0h1v1h-1zM105 9h1v1h-1zM222 9h1v1h-1zM147 12h1v1h-1zM245 1h1v1h-1zM205 0h1v1h-1zM103 8h1v1h-1zM241 4h1v1h-1zM59 10h1v1h-1zM259 11h1v1h-1zM12 10h1v1h-1zM157 13h2v1h-2zM135 5h4v1h-4zM97 14h1v1h-1zM26 12h1v1h-1zM133 9h2v1h-2zM0 3h1v1h-1zM153 7h1v1h-1zM188 8h1v1h-1zM146 9h1v1h-1zM156 12h1v1h-1zM167 4h2v1h-2zM112 4h1v1h-1zM161 0h1v1h-1zM47 8h2v1h-2zM40 2h3v1h-3zM170 10h1v1h-1zM95 11h1v1h-1zM108 10h2v1h-2zM171 11h1v1h-1zM102 12h1v1h-1zM104 6h1v1h-1zM60 8h1v1h-1zM119 14h1v1h-1zM190 4h4v1h-4zM169 6h1v1h-1zM35 14h1v1h-1zM94 2h1v1h-1zM215 7h2v1h-2zM217 0h3v1h-3zM148 8h2v1h-2zM239 1h1v1h-1zM38 6h1v1h-1zM160 2h1v1h-1zM83 12h2v1h-2zM0 7h2v1h-2zM44 3h2v1h-2zM251 11h1v1h-1zM89 11h1v1h-1zM246 2h1v1h-1zM165 14h1v1h-1zM31 4h1v1h-1zM12 3h1v1h-1zM229 10h1v1h-1zM256 3h1v1h-1zM233 12h1v1h-1zM72 6h1v1h-1zM242 6h2v1h-2zM97 9h1v1h-1zM3 11h2v1h-2zM164 6h4v1h-4zM230 11h1v1h-1zM215 14h1v1h-1zM69 6h2v1h-2zM3 7h1v1h-1zM248 14h2v1h-2zM230 13h1v1h-1zM251 1h1v1h-1zM215 8h5v1h-5zM118 9h1v1h-1zM241 3h2v1h-2zM249 8h3v1h-3zM8 6h2v1h-2zM213 10h1v1h-1zM124 5h1v1h-1zM256 7h1v1h-1zM99 10h1v1h-1zM180 8h2v1h-2zM125 3h2v1h-2zM26 6h1v1h-1zM22 12h1v1h-1zM180 11h1v1h-1zM191 3h3v1h-3zM176 3h6v1h-6zM26 13h1v1h-1zM82 6h3v1h-3zM245 4h3v1h-3zM172 14h1v1h-1zM222 14h1v1h-1zM76 0h1v1h-1zM177 10h1v1h-1zM70 1h1v1h-1zM217 13h2v1h-2zM107 3h1v1h-1zM151 11h2v1h-2zM170 5h1v1h-1zM139 8h1v1h-1zM218 4h1v1h-1zM191 2h1v1h-1zM16 5h1v1h-1zM241 10h1v1h-1zM224 8h2v1h-2zM145 3h3v1h-3zM118 12h1v1h-1zM53 2h1v1h-1zM244 2h1v1h-1zM138 4h1v1h-1zM244 10h1v1h-1zM64 9h1v1h-1zM67 9h4v1h-4zM36 2h1v1h-1zM28 2h1v1h-1zM1 1h1v1h-1zM229 8h1v1h-1zM236 6h1v1h-1zM175 7h1v1h-1zM218 7h2v1h-2zM65 6h3v1h-3zM7 3h1v1h-1zM208 10h1v1h-1zM229 9h1v1h-1zM155 11h2v1h-2zM197 14h1v1h-1zM247 8h1v1h-1zM134 8h2v1h-2zM33 3h1v1h-1zM14 6h2v1h-2zM101 9h1v1h-1zM258 3h1v1h-1zM111 0h1v1h-1zM255 8h2v1h-2zM161 7h1v1h-1zM13 14h1v1h-1zM225 0h1v1h-1zM131 0h1v1h-1zM10 1h1v1h-1zM169 8h3v1h-3zM54 11h1v1h-1zM208 3h1v1h-1zM129 2h2v1h-2zM66 10h3v1h-3zM140 7h3v1h-3zM85 0h1v1h-1zM72 9h1v1h-1zM83 0h1v1h-1zM226 10h1v1h-1zM148 13h1v1h-1zM35 4h5v1h-5zM185 5h1v1h-1zM4 1h1v1h-1zM70 4h1v1h-1zM64 13h1v1h-1zM46 9h2v1h-2zM6 0h1v1h-1zM26 0h1v1h-1zM114 4h1v1h-1zM214 6h1v1h-1zM131 13h1v1h-1zM71 13h1v1h-1zM147 5h1v1h-1zM96 2h1v1h-1zM194 9h1v1h-1zM231 4h1v1h-1zM244 3h4v1h-4zM117 6h1v1h-1zM131 3h1v1h-1zM205 7h1v1h-1zM141 12h2v1h-2zM203 6h2v1h-2zM107 9h3v1h-3zM18 9h2v1h-2zM50 11h1v1h-1zM38 8h2v1h-2zM95 10h1v1h-1zM148 4h1v1h-1zM216 6h1v1h-1zM224 13h1v1h-1zM82 9h2v1h-2zM246 9h2v1h-2zM73 4h2v1h-2zM225 3h2v1h-2zM253 11h1v1h-1zM57 3h1v1h-1zM251 9h1v1h-1zM204 12h1v1h-1zM206 13h1v1h-1zM183 13h2v1h-2zM217 1h1v1h-1zM52 7h1v1h-1zM148 9h1v1h-1zM47 5h1v1h-1zM51 9h1v1h-1zM188 6h3v1h-3zM230 3h2v1h-2zM118 1h1v1h-1zM0 13h1v1h-1zM192 14h1v1h-1zM233 8h1v1h-1zM27 14h1v1h-1zM6 12h2v1h-2zM145 2h1v1h-1zM160 1h1v1h-1zM111 7h4v1h-4zM10 4h1v1h-1zM167 13h1v1h-1zM126 7h1v1h-1zM134 3h1v1h-1zM145 4h1v1h-1zM3 4h2v1h-2zM155 9h3v1h-3zM168 14h1v1h-1zM250 5h1v1h-1zM203 13h1v1h-1zM147 6h2v1h-2zM66 5h1v1h-1zM95 8h1v1h-1zM45 6h1v1h-1zM198 10h1v1h-1zM5 9h2v1h-2zM118 0h1v1h-1zM125 8h1v1h-1zM251 0h1v1h-1zM147 11h2v1h-2zM98 3h1v1h-1zM119 10h1v1h-1zM202 11h1v1h-1zM226 7h1v1h-1zM174 10h1v1h-1zM90 7h1v1h-1zM253 5h1v1h-1zM49 6h2v1h-2zM13 0h1v1h-1zM181 7h1v1h-1zM56 11h1v1h-1zM235 4h1v1h-1zM20 12h1v1h-1zM112 5h2v1h-2zM168 5h1v1h-1zM229 5h1v1h-1zM152 12h1v1h-1zM135 12h2v1h-2zM172 10h1v1h-1zM104 2h1v1h-1zM130 9h2v1h-2zM206 3h1v1h-1zM58 9h2v1h-2zM215 11h4v1h-4zM20 0h1v1h-1zM170 9h1v1h-1zM248 11h2v1h-2zM40 6h1v1h-1zM101 7h1v1h-1zM161 14h2v1h-2zM2 14h1v1h-1zM128 5h2v1h-2zM170 7h2v1h-2zM178 7h2v1h-2zM96 7h1v1h-1zM164 8h1v1h-1zM166 12h1v1h-1zM257 5h1v1h-1zM213 9h1v1h-1zM119 4h1v1h-1zM18 5h4v1h-4zM207 4h1v1h-1zM221 13h1v1h-1zM81 14h1v1h-1zM10 9h1v1h-1zM251 10h1v1h-1zM193 10h1v1h-1zM24 8h3v1h-3zM154 12h1v1h-1zM112 10h1v1h-1zM15 14h1v1h-1zM150 4h1v1h-1zM22 11h1v1h-1zM204 4h1v1h-1zM150 6h1v1h-1zM79 9h1v1h-1zM25 7h2v1h-2zM128 3h1v1h-1zM191 13h1v1h-1zM132 14h1v1h-1zM57 10h1v1h-1zM89 10h1v1h-1zM59 12h1v1h-1zM168 1h1v1h-1zM183 10h2v1h-2zM213 13h1v1h-1zM189 5h1v1h-1zM26 11h2v1h-2zM39 3h1v1h-1zM44 12h1v1h-1zM241 13h1v1h-1zM108 8h1v1h-1zM40 7h1v1h-1zM131 11h3v1h-3zM147 10h1v1h-1zM180 4h3v1h-3zM69 12h3v1h-3zM42 4h1v1h-1zM149 7h3v1h-3zM80 12h1v1h-1zM6 10h3v1h-3zM100 11h1v1h-1zM172 9h3v1h-3zM244 7h1v1h-1zM125 14h1v1h-1zM231 10h3v1h-3zM49 5h1v1h-1zM179 14h1v1h-1zM155 4h2v1h-2zM139 6h1v1h-1zM140 1h1v1h-1zM63 3h1v1h-1zM249 3h1v1h-1zM105 14h2v1h-2zM71 7h3v1h-3zM76 9h1v1h-1zM20 3h1v1h-1zM97 8h1v1h-1zM22 3h1v1h-1zM74 6h1v1h-1zM12 9h1v1h-1zM247 6h1v1h-1zM242 8h2v1h-2zM184 8h1v1h-1zM225 4h1v1h-1zM228 7h1v1h-1zM73 3h1v1h-1zM96 5h2v1h-2zM212 6h1v1h-1zM7 11h2v1h-2zM180 9h1v1h-1zM251 6h2v1h-2zM142 9h2v1h-2zM219 2h1v1h-1zM135 1h1v1h-1zM246 10h1v1h-1zM223 4h1v1h-1zM36 9h1v1h-1zM221 1h1v1h-1zM106 13h1v1h-1zM15 13h1v1h-1zM128 11h2v1h-2zM174 1h1v1h-1zM17 3h2v1h-2zM79 4h1v1h-1zM92 5h1v1h-1zM200 5h2v1h-2zM243 12h2v1h-2zM5 6h2v1h-2zM77 6h1v1h-1zM42 7h1v1h-1zM253 1h1v1h-1zM105 3h1v1h-1zM79 2h1v1h-1zM106 6h3v1h-3zM141 4h3v1h-3zM10 7h1v1h-1zM224 7h1v1h-1zM254 3h1v1h-1zM187 7h1v1h-1zM80 1h1v1h-1zM163 3h2v1h-2zM30 0h1v1h-1zM159 5h1v1h-1zM18 13h1v1h-1zM164 0h1v1h-1zM61 2h1v1h-1zM170 4h4v1h-4zM65 0h1v1h-1zM254 4h1v1h-1zM22 4h4v1h-4zM133 12h1v1h-1zM137 0h1v1h-1zM166 3h3v1h-3zM193 6h1v1h-1zM152 4h1v1h-1zM171 3h2v1h-2zM198 7h1v1h-1zM0 0h1v1h-1zM61 3h1v1h-1zM245 6h1v1h-1zM259 7h1v1h-1zM258 12h1v1h-1zM13 8h3v1h-3zM176 4h1v1h-1zM98 11h1v1h-1zM178 5h1v1h-1zM237 5h1v1h-1zM17 12h1v1h-1z"/><path fill="#a2fca2" fill-opacity="0.45" d="M91 13h1v1h-1zM59 1h1v1h-1zM101 8h1v1h-1zM204 5h1v1h-1zM142 14h1v1h-1zM194 7h1v1h-1zM235 3h1v1h-1zM10 11h2v1h-2zM186 3h2v1h-2zM44 11h1v1h-1zM36 11h1v1h-1zM87 6h2v1h-2zM70 10h1v1h-1zM84 5h2v1h-2zM218 5h2v1h-2zM81 7h1v1h-1zM54 5h1v1h-1zM174 3h1v1h-1zM155 6h2v1h-2zM221 3h3v1h-3zM126 11h1v1h-1zM186 1h1v1h-1zM127 6h1v1h-1zM245 5h1v1h-1zM56 8h1v1h-1zM42 8h4v1h-4zM179 2h1v1h-1zM241 9h1v1h-1zM243 9h1v1h-1zM243 4h1v1h-1zM214 3h3v1h-3zM215 12h1v1h-1zM220 6h1v1h-1zM56 7h2v1h-2zM75 8h2v1h-2zM183 7h1v1h-1zM156 3h3v1h-3zM208 8h1v1h-1zM213 7h1v1h-1zM189 10h2v1h-2zM229 12h1v1h-1zM6 7h3v1h-3zM155 2h2v1h-2zM252 2h1v1h-1zM21 9h3v1h-3zM197 4h2v1h-2zM23 1h2v1h-2zM126 10h1v1h-1zM257 10h1v1h-1zM138 9h1v1h-1zM178 13h1v1h-1zM213 8h1v1h-1zM125 6h1v1h-1zM145 8h1v1h-1zM75 13h1v1h-1zM174 12h2v1h-2zM29 5h1v1h-1zM78 7h1v1h-1zM130 4h1v1h-1zM18 6h1v1h-1zM0 9h1v1h-1zM66 8h5v1h-5zM133 5h1v1h-1zM23 10h1v1h-1zM46 0h1v1h-1zM165 9h1v1h-1zM60 5h1v1h-1zM242 1h1v1h-1zM42 3h1v1h-1zM184 9h3v1h-3zM188 11h1v1h-1zM146 13h1v1h-1zM75 10h2v1h-2zM106 4h3v1h-3zM84 14h1v1h-1zM178 8h1v1h-1zM103 5h6v1h-6zM15 4h4v1h-4zM219 10h1v1h-1zM220 11h1v1h-1zM137 7h1v1h-1zM225 12h1v1h-1zM67 7h1v1h-1zM126 5h1v1h-1zM61 14h1v1h-1zM119 3h1v1h-1zM45 10h1v1h-1zM83 10h1v1h-1zM251 13h1v1h-1zM239 8h2v1h-2zM53 4h2v1h-2zM10 10h1v1h-1zM218 6h1v1h-1zM47 10h1v1h-1zM79 6h2v1h-2zM28 3h1v1h-1zM11 2h1v1h-1zM159 4h2v1h-2zM175 13h1v1h-1zM0 5h2v1h-2zM9 12h1v1h-1zM147 7h1v1h-1zM62 11h1v1h-1zM47 6h1v1h-1zM24 6h1v1h-1zM103 3h1v1h-1zM193 8h2v1h-2zM253 9h1v1h-1zM14 10h2v1h-2zM191 9h1v1h-1zM15 11h1v1h-1zM232 11h2v1h-2zM221 8h1v1h-1zM103 7h3v1h-3zM0 8h1v1h-1zM225 6h1v1h-1zM186 4h1v1h-1zM2 13h1v1h-1zM242 7h1v1h-1zM178 6h2v1h-2zM53 3h1v1h-1zM87 5h1v1h-1zM88 3h1v1h-1zM33 0h1v1h-1zM189 3h1v1h-1zM113 9h2v1h-2zM180 5h2v1h-2zM113 6h1v1h-1zM186 12h1v1h-1zM0 4h2v1h-2zM7 2h2v1h-2zM124 7h1v1h-1zM4 5h1v1h-1zM132 8h1v1h-1zM136 11h2v1h-2zM8 14h1v1h-1zM172 6h5v1h-5zM99 4h1v1h-1zM136 13h1v1h-1zM36 10h3v1h-3zM179 10h2v1h-2zM254 12h1v1h-1zM40 5h3v1h-3zM244 0h1v1h-1zM125 4h3v1h-3zM231 5h1v1h-1zM207 7h1v1h-1zM158 10h1v1h-1zM20 4h1v1h-1zM44 1h1v1h-1zM206 14h1v1h-1zM63 7h1v1h-1zM76 14h1v1h-1zM30 8h1v1h-1zM55 6h1v1h-1zM63 8h2v1h-2zM142 2h1v1h-1zM62 5h1v1h-1zM163 10h1v1h-1zM3 8h3v1h-3zM215 4h1v1h-1zM69 2h1v1h-1zM146 0h2v1h-2zM27 4h2v1h-2zM7 8h1v1h-1zM226 5h1v1h-1zM119 5h1v1h-1zM53 8h1v1h-1zM16 0h2v1h-2zM157 8h1v1h-1zM44 5h1v1h-1zM20 6h1v1h-1zM19 7h1v1h-1zM132 2h1v1h-1zM31 7h1v1h-1zM21 8h1v1h-1zM222 11h4v1h-4zM116 10h2v1h-2zM137 3h3v1h-3zM157 14h1v1h-1zM215 5h1v1h-1zM258 8h1v1h-1zM58 11h3v1h-3zM116 7h1v1h-1zM38 11h1v1h-1zM17 10h2v1h-2zM158 1h1v1h-1zM160 3h2v1h-2zM66 1h1v1h-1zM257 11h1v1h-1zM24 2h1v1h-1zM178 11h1v1h-1zM128 0h1v1h-1zM110 8h1v1h-1zM0 10h4v1h-4zM13 1h1v1h-1zM116 9h1v1h-1zM51 4h1v1h-1zM15 1h1v1h-1zM178 1h1v1h-1zM162 5h1v1h-1zM165 4h1v1h-1zM142 13h1v1h-1zM10 3h1v1h-1zM148 2h2v1h-2zM75 11h2v1h-2zM24 11h1v1h-1zM159 9h1v1h-1zM193 5h2v1h-2zM116 3h2v1h-2zM198 8h1v1h-1zM59 4h2v1h-2zM176 8h1v1h-1zM130 8h1v1h-1zM5 13h1v1h-1zM92 4h1v1h-1zM100 6h2v1h-2zM141 6h3v1h-3zM0 11h1v1h-1zM74 5h2v1h-2zM68 13h1v1h-1zM226 9h1v1h-1zM145 7h1v1h-1zM145 6h1v1h-1zM94 5h1v1h-1zM238 11h1v1h-1zM160 13h1v1h-1zM216 9h1v1h-1zM161 9h1v1h-1zM157 7h2v1h-2zM172 13h1v1h-1zM152 9h1v1h-1zM159 11h2v1h-2zM21 2h1v1h-1zM135 10h1v1h-1zM253 10h2v1h-2zM217 12h2v1h-2zM61 9h1v1h-1zM172 5h3v1h-3zM145 12h1v1h-1zM162 2h3v1h-3zM44 7h1v1h-1zM6 5h3v1h-3zM211 8h1v1h-1zM177 9h2v1h-2zM245 13h1v1h-1zM60 7h1v1h-1zM15 12h1v1h-1zM164 11h1v1h-1zM116 8h3v1h-3zM156 0h1v1h-1zM62 6h2v1h-2zM52 6h1v1h-1zM8 0h1v1h-1zM12 12h2v1h-2zM182 11h1v1h-1z"/></svg>
<div class="btn" style="left:1295px;top:190px;width:20px;height:20px;border-radius:3px"></div>
<svg class="a" style="left:1296px;top:200px" width="17" height="17" viewBox="0 0 17 17">
<use href="#clip"/>
</svg>

<div class="a h4" style="left:41px;top:226px">Request URL</div>
<div class="blk" style="left:41px;top:247px;width:1284px;height:37px"></div>
<div class="a code" style="left:51px;top:258px">http://[                             ]/api/compat/wakatime/v1/users/hatkidchan</div>
<svg style="position:absolute;left:108px;top:258px;opacity:1.0" width="210" height="15" viewBox="0 0 210 15"><path fill="#ffffff" d="M166 13h1v1h-1zM133 6h1v1h-1zM56 2h1v1h-1zM76 11h1v1h-1zM34 1h1v1h-1zM19 8h1v1h-1zM124 7h1v1h-1zM150 9h1v1h-1zM146 0h1v1h-1zM182 8h1v1h-1zM201 2h1v1h-1zM20 12h2v1h-2zM4 5h1v1h-1zM47 6h1v1h-1zM185 1h1v1h-1zM133 3h1v1h-1zM151 11h1v1h-1zM134 13h1v1h-1zM131 1h1v1h-1zM198 4h1v1h-1zM8 14h2v1h-2zM156 14h1v1h-1zM151 8h1v1h-1zM124 5h2v1h-2zM131 2h1v1h-1zM43 0h1v1h-1zM62 12h1v1h-1zM88 0h2v1h-2zM156 7h1v1h-1zM165 1h1v1h-1zM166 7h1v1h-1zM38 3h1v1h-1zM157 4h2v1h-2zM180 12h2v1h-2zM22 3h1v1h-1zM19 4h1v1h-1zM82 7h1v1h-1zM192 0h1v1h-1zM129 0h1v1h-1zM3 12h2v1h-2zM39 5h2v1h-2zM180 8h1v1h-1zM22 9h2v1h-2zM43 6h1v1h-1zM87 11h1v1h-1zM180 2h1v1h-1zM143 11h1v1h-1zM159 12h1v1h-1zM138 3h1v1h-1zM130 6h1v1h-1zM136 11h5v1h-5zM33 5h1v1h-1zM91 8h1v1h-1zM85 3h1v1h-1zM130 10h2v1h-2zM120 2h1v1h-1zM174 7h1v1h-1zM94 5h1v1h-1zM122 6h1v1h-1zM198 1h1v1h-1zM157 12h1v1h-1zM163 1h1v1h-1zM39 13h1v1h-1zM37 2h1v1h-1zM183 13h1v1h-1zM7 1h1v1h-1zM169 5h2v1h-2zM195 3h1v1h-1zM2 8h4v1h-4zM207 11h1v1h-1zM198 7h1v1h-1zM186 9h1v1h-1zM192 3h1v1h-1zM99 5h2v1h-2zM133 7h1v1h-1zM24 2h1v1h-1zM164 5h1v1h-1zM172 5h1v1h-1zM58 4h1v1h-1zM166 3h1v1h-1zM25 5h1v1h-1zM147 4h1v1h-1zM55 13h1v1h-1zM13 4h1v1h-1zM60 2h1v1h-1zM121 7h1v1h-1zM7 2h1v1h-1zM60 12h1v1h-1zM110 9h1v1h-1zM175 10h1v1h-1zM195 12h1v1h-1zM27 9h1v1h-1zM200 13h1v1h-1zM162 4h3v1h-3zM94 11h2v1h-2zM25 4h2v1h-2zM126 3h3v1h-3zM153 4h1v1h-1zM108 9h1v1h-1zM25 13h1v1h-1zM12 9h2v1h-2zM166 8h1v1h-1zM52 5h1v1h-1zM174 6h1v1h-1zM144 3h4v1h-4zM58 5h2v1h-2zM117 1h2v1h-2zM89 4h1v1h-1zM147 11h1v1h-1zM89 11h1v1h-1zM186 11h1v1h-1zM85 14h1v1h-1zM38 6h2v1h-2zM158 5h1v1h-1zM50 11h1v1h-1zM53 3h1v1h-1zM157 6h1v1h-1zM131 9h1v1h-1zM196 11h1v1h-1zM115 4h1v1h-1zM103 14h1v1h-1zM42 2h1v1h-1zM94 9h6v1h-6zM150 5h1v1h-1zM184 9h1v1h-1zM41 1h1v1h-1zM182 4h1v1h-1zM20 1h1v1h-1zM53 1h1v1h-1zM76 8h1v1h-1zM74 13h1v1h-1zM72 9h1v1h-1zM10 10h1v1h-1zM142 13h3v1h-3zM43 3h1v1h-1zM138 8h2v1h-2zM42 8h1v1h-1zM189 14h1v1h-1zM12 8h2v1h-2zM40 0h1v1h-1zM95 0h1v1h-1zM122 3h2v1h-2zM108 6h1v1h-1zM171 8h1v1h-1zM97 14h1v1h-1zM208 9h2v1h-2zM204 4h2v1h-2zM71 3h1v1h-1zM0 9h1v1h-1zM185 14h1v1h-1zM5 13h1v1h-1zM42 9h2v1h-2zM206 5h1v1h-1zM55 0h2v1h-2zM8 3h1v1h-1zM39 8h1v1h-1zM1 3h2v1h-2zM12 6h1v1h-1zM192 7h2v1h-2zM208 7h1v1h-1zM7 6h1v1h-1zM124 9h1v1h-1zM196 4h1v1h-1zM127 2h1v1h-1zM174 13h2v1h-2zM163 7h1v1h-1zM72 6h1v1h-1zM27 14h1v1h-1zM35 5h1v1h-1zM16 9h2v1h-2zM167 5h1v1h-1zM100 4h1v1h-1zM15 10h1v1h-1zM65 12h1v1h-1zM122 8h1v1h-1zM122 5h1v1h-1zM167 6h1v1h-1zM39 11h4v1h-4zM38 4h2v1h-2zM9 8h1v1h-1zM102 1h1v1h-1zM98 6h1v1h-1zM176 1h1v1h-1zM28 6h1v1h-1zM125 8h1v1h-1zM121 10h1v1h-1zM93 8h1v1h-1zM47 5h1v1h-1zM154 0h1v1h-1zM103 8h1v1h-1zM28 1h1v1h-1zM64 11h2v1h-2zM131 7h1v1h-1zM209 11h1v1h-1zM183 1h1v1h-1zM118 5h1v1h-1zM22 6h2v1h-2zM119 12h1v1h-1zM127 13h1v1h-1zM139 4h3v1h-3zM119 10h1v1h-1zM75 10h1v1h-1zM209 12h1v1h-1zM201 1h1v1h-1zM61 1h1v1h-1zM95 8h2v1h-2zM176 4h1v1h-1zM38 1h1v1h-1zM120 4h2v1h-2zM23 10h1v1h-1zM191 14h1v1h-1zM42 10h2v1h-2zM142 8h1v1h-1zM185 6h2v1h-2zM201 0h1v1h-1zM209 5h1v1h-1zM194 5h1v1h-1zM29 9h1v1h-1zM195 7h2v1h-2zM5 6h1v1h-1zM2 4h2v1h-2zM70 4h1v1h-1zM5 3h1v1h-1zM48 11h1v1h-1zM29 10h3v1h-3zM157 8h1v1h-1zM130 3h2v1h-2zM201 3h1v1h-1zM59 14h1v1h-1zM27 10h1v1h-1zM101 6h1v1h-1zM185 13h1v1h-1zM16 6h1v1h-1zM118 14h1v1h-1zM29 13h2v1h-2zM161 3h1v1h-1zM186 5h1v1h-1zM29 7h3v1h-3zM118 7h1v1h-1zM173 10h1v1h-1zM119 3h1v1h-1zM102 2h1v1h-1zM84 5h2v1h-2zM147 7h1v1h-1zM58 7h1v1h-1zM32 8h2v1h-2zM170 4h1v1h-1zM3 2h2v1h-2zM22 8h2v1h-2zM21 7h1v1h-1zM28 8h1v1h-1zM78 0h1v1h-1zM0 0h1v1h-1zM74 12h1v1h-1zM12 13h1v1h-1zM16 3h1v1h-1zM54 14h1v1h-1zM100 2h1v1h-1zM65 2h1v1h-1zM207 0h1v1h-1zM9 7h3v1h-3zM51 8h4v1h-4zM98 4h1v1h-1zM126 11h1v1h-1zM10 12h1v1h-1zM191 12h1v1h-1zM163 3h2v1h-2zM206 1h1v1h-1zM103 5h1v1h-1zM61 10h3v1h-3zM165 11h1v1h-1zM87 8h1v1h-1zM152 9h2v1h-2zM183 5h1v1h-1zM5 1h1v1h-1zM77 9h1v1h-1zM5 14h1v1h-1zM37 5h1v1h-1zM25 8h1v1h-1zM204 5h1v1h-1zM183 7h7v1h-7zM63 13h1v1h-1zM56 5h1v1h-1zM64 5h1v1h-1zM169 7h1v1h-1zM24 11h2v1h-2zM22 1h1v1h-1zM135 9h2v1h-2zM94 3h4v1h-4zM167 1h1v1h-1zM127 8h2v1h-2zM32 11h2v1h-2zM99 3h1v1h-1zM9 6h2v1h-2zM169 13h1v1h-1zM198 2h2v1h-2zM120 1h4v1h-4zM30 6h1v1h-1zM189 11h2v1h-2zM28 2h2v1h-2zM102 9h1v1h-1zM41 6h1v1h-1zM75 1h1v1h-1zM60 4h1v1h-1zM163 13h1v1h-1zM204 10h3v1h-3zM163 6h1v1h-1zM31 0h1v1h-1zM14 6h1v1h-1zM7 8h1v1h-1zM204 8h2v1h-2zM147 9h1v1h-1zM120 5h1v1h-1zM97 10h2v1h-2zM54 11h2v1h-2zM131 0h1v1h-1zM54 6h2v1h-2zM25 12h1v1h-1zM51 3h1v1h-1zM199 10h2v1h-2zM195 6h1v1h-1zM25 0h1v1h-1zM207 4h2v1h-2zM56 3h1v1h-1zM60 9h1v1h-1zM17 11h1v1h-1zM77 3h1v1h-1zM97 5h1v1h-1zM65 13h1v1h-1zM81 8h1v1h-1zM83 13h1v1h-1zM49 1h2v1h-2zM27 5h2v1h-2zM135 12h1v1h-1zM194 8h1v1h-1zM184 0h1v1h-1zM91 4h1v1h-1zM128 14h1v1h-1zM21 4h2v1h-2zM196 2h1v1h-1zM59 3h1v1h-1zM144 10h2v1h-2zM198 13h1v1h-1zM183 3h2v1h-2zM141 9h1v1h-1zM15 4h3v1h-3zM203 14h1v1h-1zM1 5h2v1h-2zM206 12h1v1h-1zM39 2h2v1h-2zM203 0h1v1h-1zM174 3h1v1h-1zM30 4h2v1h-2zM119 8h1v1h-1zM121 14h2v1h-2zM40 7h1v1h-1zM100 13h1v1h-1zM188 5h1v1h-1zM128 5h3v1h-3zM207 3h3v1h-3zM197 3h2v1h-2zM175 14h2v1h-2zM5 10h4v1h-4zM60 8h1v1h-1zM94 6h2v1h-2z"/><path fill="#ffffff" fill-opacity="0.45" d="M91 5h1v1h-1zM135 2h1v1h-1zM172 7h1v1h-1zM51 9h3v1h-3zM61 13h1v1h-1zM138 5h3v1h-3zM127 9h1v1h-1zM133 5h1v1h-1zM192 13h1v1h-1zM207 13h1v1h-1zM61 0h1v1h-1zM194 0h1v1h-1zM170 12h1v1h-1zM191 10h1v1h-1zM0 11h2v1h-2zM42 14h2v1h-2zM182 11h2v1h-2zM44 11h2v1h-2zM8 11h1v1h-1zM31 5h1v1h-1zM99 7h4v1h-4zM202 9h3v1h-3zM1 7h1v1h-1zM41 4h1v1h-1zM124 10h2v1h-2zM143 7h2v1h-2zM196 13h1v1h-1zM200 4h1v1h-1zM62 4h4v1h-4zM145 5h2v1h-2zM63 6h2v1h-2zM59 10h1v1h-1zM62 3h1v1h-1zM121 0h1v1h-1zM45 12h1v1h-1zM192 1h1v1h-1zM6 5h2v1h-2zM202 4h1v1h-1zM36 9h1v1h-1zM52 2h1v1h-1zM133 11h2v1h-2zM122 11h1v1h-1zM53 12h1v1h-1zM142 1h1v1h-1zM116 14h1v1h-1zM149 6h1v1h-1zM11 3h1v1h-1zM126 4h2v1h-2zM186 3h1v1h-1zM89 8h1v1h-1zM140 0h1v1h-1zM5 9h2v1h-2zM204 12h1v1h-1zM100 0h1v1h-1zM136 1h1v1h-1zM199 8h4v1h-4zM206 6h2v1h-2zM95 13h1v1h-1zM196 10h1v1h-1zM151 2h1v1h-1zM163 9h1v1h-1zM129 12h2v1h-2zM143 4h2v1h-2zM22 5h1v1h-1zM128 1h1v1h-1zM202 10h1v1h-1zM195 9h1v1h-1zM185 8h1v1h-1zM136 6h4v1h-4zM205 2h1v1h-1zM135 5h1v1h-1zM185 4h2v1h-2zM138 7h1v1h-1zM164 8h1v1h-1zM98 11h2v1h-2zM200 11h2v1h-2zM47 2h1v1h-1zM117 13h1v1h-1zM141 7h1v1h-1zM170 6h1v1h-1zM45 9h1v1h-1zM63 0h2v1h-2zM161 11h1v1h-1zM56 9h1v1h-1zM188 2h1v1h-1zM52 10h3v1h-3zM203 3h2v1h-2zM13 7h1v1h-1zM93 4h1v1h-1zM121 12h2v1h-2zM193 11h2v1h-2zM7 4h1v1h-1zM16 7h1v1h-1zM200 7h3v1h-3zM144 8h1v1h-1zM97 7h1v1h-1zM79 10h2v1h-2zM10 11h2v1h-2zM141 2h1v1h-1zM139 12h1v1h-1zM54 4h2v1h-2zM5 7h3v1h-3zM16 14h1v1h-1zM149 4h1v1h-1zM124 6h1v1h-1zM58 6h1v1h-1zM108 11h2v1h-2zM201 5h2v1h-2zM16 12h1v1h-1zM17 10h1v1h-1zM26 6h1v1h-1zM127 6h1v1h-1zM115 11h1v1h-1zM108 7h1v1h-1zM36 12h1v1h-1zM73 10h1v1h-1zM133 10h4v1h-4zM22 14h2v1h-2zM207 8h2v1h-2zM93 0h1v1h-1zM63 7h3v1h-3zM127 0h1v1h-1zM182 10h1v1h-1zM157 10h4v1h-4zM12 5h2v1h-2zM93 7h2v1h-2zM145 6h3v1h-3zM0 2h2v1h-2zM197 5h2v1h-2zM1 6h1v1h-1zM30 8h1v1h-1zM138 0h1v1h-1zM137 12h1v1h-1zM99 12h2v1h-2zM138 13h1v1h-1zM131 11h1v1h-1zM132 8h4v1h-4zM180 6h1v1h-1zM189 6h1v1h-1zM98 8h1v1h-1zM64 8h1v1h-1zM20 11h1v1h-1zM3 6h1v1h-1zM168 9h2v1h-2zM42 5h1v1h-1zM120 6h1v1h-1zM54 5h1v1h-1zM12 14h1v1h-1zM134 0h1v1h-1zM190 8h2v1h-2zM190 4h1v1h-1zM19 0h1v1h-1zM158 3h1v1h-1zM8 9h3v1h-3zM114 10h1v1h-1zM209 14h1v1h-1zM89 10h1v1h-1zM206 9h1v1h-1zM191 9h1v1h-1zM49 10h2v1h-2zM101 14h1v1h-1zM29 11h1v1h-1zM136 3h1v1h-1zM62 8h1v1h-1zM161 6h1v1h-1zM125 14h2v1h-2zM112 7h1v1h-1zM128 11h2v1h-2zM184 10h6v1h-6zM124 11h1v1h-1zM97 0h1v1h-1zM65 3h1v1h-1zM175 11h1v1h-1zM120 9h3v1h-3zM136 4h1v1h-1zM140 10h2v1h-2zM102 3h1v1h-1zM23 7h1v1h-1zM165 6h1v1h-1zM130 13h1v1h-1zM157 11h2v1h-2zM85 9h1v1h-1zM108 8h1v1h-1zM28 4h1v1h-1zM128 7h2v1h-2zM170 1h1v1h-1zM187 1h3v1h-3zM26 3h4v1h-4zM205 7h2v1h-2zM18 13h1v1h-1zM196 8h2v1h-2zM193 10h1v1h-1zM18 12h1v1h-1zM167 10h1v1h-1zM197 9h1v1h-1zM202 6h2v1h-2zM163 0h1v1h-1z"/></svg>

<div class="a h4" style="left:41px;top:295px">Server response</div>
<div class="a" style="left:41px;top:329px;font-size:14px;line-height:18px;font-weight:bold;color:#3b4151">Code</div>
<div class="a h4" style="left:125px;top:330px;font-size:12.4px">Details</div>
<div class="a" style="left:41px;top:360px;width:1284px;height:1px;background:#c9cfd8"></div>

<div class="a" style="left:41px;top:372px;font-size:14px;line-height:18px;color:#3b4151">404</div>
<div class="a mono" style="left:41px;top:393px;font-size:11px;line-height:14px;font-style:italic;color:#909090;font-weight:bold">Undocumented</div>
<div class="a" style="left:125px;top:390px;font-size:17px;line-height:20px;color:#3b4151">Error: Not Found</div>

<div class="a h4" style="left:125px;top:427px">Response body</div>
<div class="blk" style="left:125px;top:448px;width:1200px;height:147px"></div>
<div class="a code" style="left:132px;top:455px"><span class="t">&lt;html&gt;</span>
<span class="t">&lt;head&gt;&lt;title&gt;</span>404 Not Found<span class="t">&lt;/title&gt;&lt;/head&gt;</span>
<span class="t">&lt;body&gt;</span>
<span class="t">&lt;center&gt;&lt;h1&gt;</span>404 Not Found<span class="t">&lt;/h1&gt;&lt;/center&gt;</span>
<span class="t">&lt;hr&gt;&lt;center&gt;</span>nginx/1.21.6<span class="t">&lt;/center&gt;</span>
<span class="t">&lt;/body&gt;</span>
<span class="t">&lt;/html&gt;</span></div>
<div class="btn" style="left:1195px;top:556px;width:30px;height:30px"></div>
<svg class="a" style="left:1200px;top:566px" width="17" height="17" viewBox="0 0 17 17">
<use href="#clip"/>
</svg>
<div class="btn" style="left:1235px;top:556px;width:80px;height:30px"></div>
<div class="a" style="left:1235px;top:563px;width:80px;text-align:center;font-size:14.6px;line-height:18px;font-weight:bold;color:#fff">Download</div>

<div class="a h4" style="left:125px;top:607px">Response headers</div>
<div class="blk" style="left:125px;top:628px;width:1200px;height:105px"></div>
<div class="a code" style="left:142px;top:639px">connection: keep-alive
content-length: 153
content-type: text/html; charset=utf-8
date: Thu,29 Sep 2022 21:53:20 GMT
server: nginx/1.21.6</div>

<div class="a h4" style="left:41px;top:744px">Responses</div>
</body></html>
